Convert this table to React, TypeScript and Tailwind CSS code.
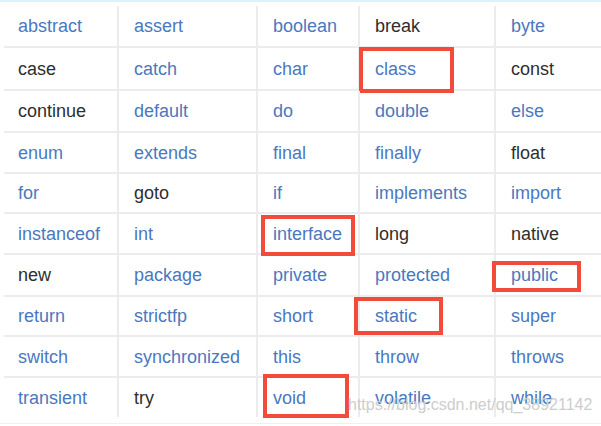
const BLUE = "text-[#4a78bf]";
const DARK = "text-[#2e2e2e]";

type Cell = { word: string; dark?: boolean; box?: string };

// red highlight boxes, offsets relative to their cell
const rows: Cell[][] = [
  [{ word: "abstract" }, { word: "assert" }, { word: "boolean" }, { word: "break", dark: true }, { word: "byte" }],
  [{ word: "case", dark: true }, { word: "catch" }, { word: "char" }, { word: "class", box: "left-[-1px] top-[-1px] w-[95px] h-[46px]" }, { word: "const", dark: true }],
  [{ word: "continue", dark: true }, { word: "default" }, { word: "do" }, { word: "double" }, { word: "else" }],
  [{ word: "enum" }, { word: "extends" }, { word: "final" }, { word: "finally" }, { word: "float", dark: true }],
  [{ word: "for" }, { word: "goto", dark: true }, { word: "if" }, { word: "implements" }, { word: "import" }],
  [{ word: "instanceof" }, { word: "int" }, { word: "interface", box: "left-[3px] top-[1px] w-[94px] h-[41px]" }, { word: "long", dark: true }, { word: "native", dark: true }],
  [{ word: "new", dark: true }, { word: "package" }, { word: "private" }, { word: "protected" }, { word: "public", box: "left-[-4px] top-[6px] w-[89px] h-[31px]" }],
  [{ word: "return" }, { word: "strictfp" }, { word: "short" }, { word: "static", box: "left-[-6px] top-[0px] w-[89px] h-[38px]" }, { word: "super" }],
  [{ word: "switch" }, { word: "synchronized" }, { word: "this" }, { word: "throw" }, { word: "throws" }],
  [{ word: "transient" }, { word: "try", dark: true }, { word: "void", box: "left-[5px] top-[-4px] w-[86px] h-[44px]" }, { word: "volatile" }, { word: "while" }],
];

const rowHeights = ["h-[42px]", "h-[43px]", "h-[42px]", "h-[41px]", "h-[40px]", "h-[41px]", "h-[42px]", "h-[40px]", "h-[41px]", "h-[39px]"];

export default function App() {
  return (
    <div className="relative w-[601px] h-[426px] overflow-hidden bg-white font-['Liberation_Sans',Arial,sans-serif]">
      <div className="h-[2px] bg-[#d9f3fa]" />
      <div className="pt-[4px] pl-[4px]">
        {rows.map((row, r) => (
          <div
            key={r}
            className={`grid grid-cols-[113px_139px_102px_136px_1fr] ${rowHeights[r]} ${r < rows.length - 1 ? "border-b-2 border-[#ececec]" : ""}`}
          >
            {row.map((cell, c) => (
              <div
                key={c}
                className={`relative flex items-center pl-[14px] ${c > 0 ? "border-l-2 border-[#ececec] pl-[15px]" : ""}`}
              >
                <span className={`text-[18px] leading-none ${cell.dark ? DARK : BLUE}`}>{cell.word}</span>
                {cell.box && <div className={`absolute border-4 border-[#f24a3b] ${cell.box}`} />}
              </div>
            ))}
          </div>
        ))}
      </div>
      <div className="absolute left-0 right-0 top-[423px] h-[1px] bg-[#f4f2de]" />
      <div className="absolute left-[348px] top-[396px] text-[16px] leading-[18px] text-[#cdcdcd] whitespace-nowrap">
        https://blog.csdn.net/qq_38921142
      </div>
    </div>
  );
}
